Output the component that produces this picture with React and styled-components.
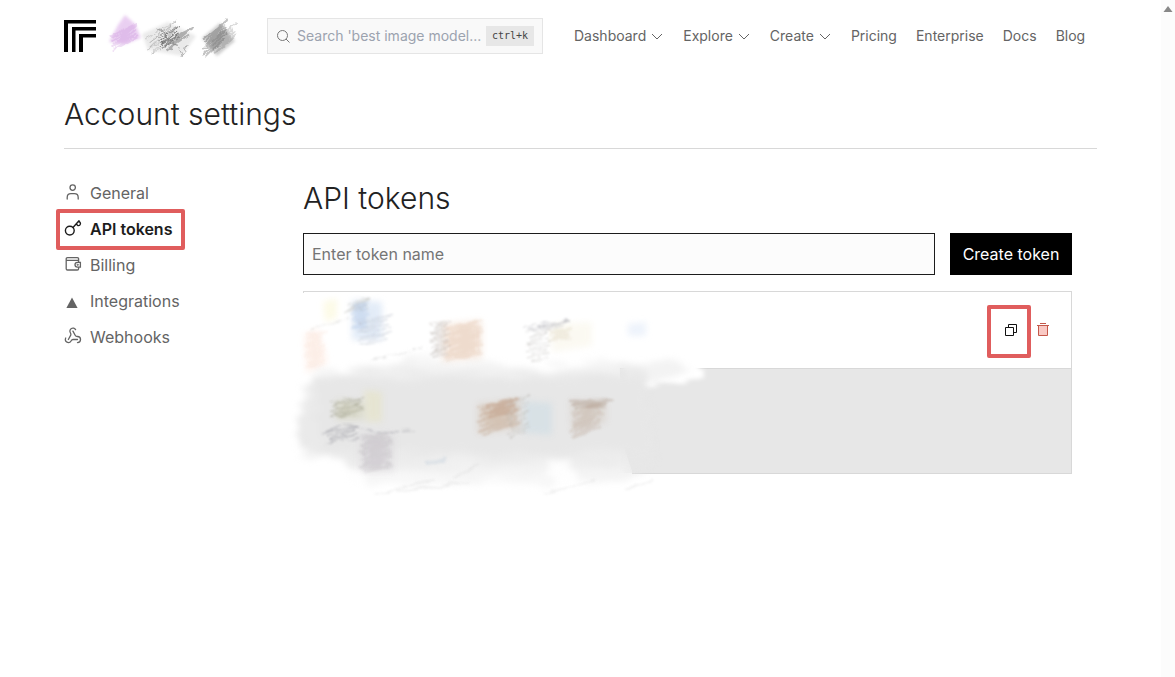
import React, { useState } from "react";
import styled, { createGlobalStyle } from "styled-components";

const GlobalStyle = createGlobalStyle`
  * {
    box-sizing: border-box;
  }
  body {
    margin: 0;
    background: #fff;
    color: #222;
    font: 400 16px/24px Inter, "Liberation Sans", sans-serif;
  }
  a {
    color: inherit;
    text-decoration: none;
  }
  button,
  input {
    font: inherit;
    border-radius: 0;
  }
`;

const Shell = styled.div`
  display: grid;
  grid-template-columns: minmax(0, 1fr) 14px;
  min-height: 100vh;
`;

const Page = styled.div`
  padding: 0 64px;
`;

const ScrollGutter = styled.div`
  display: flex;
  justify-content: center;
  padding-top: 6px;
  background: #fcfcfc;
`;

const Header = styled.header`
  display: flex;
  align-items: center;
  height: 72px;
`;

const Brand = styled.div`
  display: flex;
  align-items: center;
  width: 203px;
  flex: none;
  svg {
    display: block;
  }
`;

const Search = styled.label`
  display: flex;
  align-items: center;
  flex: none;
  width: 276px;
  height: 36px;
  padding: 0 8px;
  border: 1px solid #e5e5e5;
  background: #f9f9f9;
  input {
    flex: 1;
    min-width: 0;
    margin: 0 2px 0 6px;
    padding: 0;
    border: 0;
    outline: 0;
    background: none;
    font-size: 14px;
    text-overflow: ellipsis;
    &::placeholder {
      color: #9ca3af;
      opacity: 1;
    }
  }
  kbd {
    padding: 0 6px;
    background: #e7e7e7;
    color: #444;
    font: 10px/20px "DejaVu Sans Mono", monospace;
  }
`;

const Nav = styled.nav`
  display: flex;
  gap: 19px;
  margin-left: 31px;
  a {
    display: flex;
    align-items: center;
    gap: 4px;
    color: #646464;
    font-size: 14px;
    line-height: 20px;
  }
`;

const PageTitle = styled.h1`
  margin: 0;
  padding: 20px 0 12px;
  border-bottom: 1px solid #d8d8d8;
  font-size: 30px;
  font-weight: 350;
  line-height: 44px;
`;

const Columns = styled.div`
  display: grid;
  grid-template-columns: 239px minmax(0, 1fr);
  padding-top: 26px;
`;

const SideNav = styled.nav`
  display: flex;
  flex-direction: column;
  align-items: flex-start;
`;

const SideLink = styled.a`
  position: relative;
  display: flex;
  align-items: center;
  gap: 8px;
  height: 36px;
  color: ${({ $active }) => ($active ? "#1c1c1c" : "#646464")};
  font-weight: ${({ $active }) => ($active ? 600 : 400)};
  svg {
    margin-bottom: 2px;
  }
`;

const Marker = styled.span`
  position: absolute;
  inset: ${({ $inset }) => $inset};
  border: 4px solid #e05d5d;
  border-radius: 2px;
  pointer-events: none;
`;

const Content = styled.main`
  padding-right: 25px;
  h2 {
    margin: 0;
    font-size: 30px;
    font-weight: 350;
    line-height: 46px;
  }
`;

const TokenForm = styled.form`
  display: flex;
  gap: 15px;
  margin-top: 12px;
  input {
    flex: 1;
    min-width: 0;
    height: 42px;
    padding: 0 8px;
    border: 1px solid #1c1c1c;
    background: #fcfcfc;
    outline: 0;
    &::placeholder {
      color: #757575;
      opacity: 1;
    }
  }
  button {
    width: 122px;
    height: 42px;
    padding: 0;
    border: 0;
    background: #000;
    color: #fff;
    font-size: 16px;
  }
`;

const TokenList = styled.ul`
  position: relative;
  margin: 16px 0 0;
  padding: 0;
  border: 1px solid #d8d8d8;
  list-style: none;
`;

const TokenRow = styled.li`
  display: flex;
  justify-content: flex-end;
  align-items: center;
  gap: 12px;
  height: ${({ $muted }) => ($muted ? "105px" : "76px")};
  padding-right: 18px;
  background: ${({ $muted }) => ($muted ? "#e7e7e7" : "#fff")};
  border-top: ${({ $muted }) => ($muted ? "1px solid #d8d8d8" : "0")};
`;

const IconButton = styled.button`
  position: relative;
  display: flex;
  padding: 3px;
  border: 0;
  background: none;
`;

const ListSmudge = styled.svg`
  position: absolute;
  top: -12px;
  left: -24px;
  overflow: visible;
  pointer-events: none;
`;

const BrandIcon = () => (
  <svg width="32" height="32" viewBox="0 0 32 32" fill="#000" aria-hidden="true">
    <path d="M0 0h32v3.5H4V32H0z" />
    <path d="M8 7h24v3.5H11.5V32H8z" />
    <path d="M15 14h17v3.5H19V32h-4z" />
  </svg>
);

const Chevron = () => (
  <svg width="14" height="14" viewBox="0 0 14 14" fill="none" stroke="#646464" aria-hidden="true">
    <path d="m2 5 5 5 5-5" />
  </svg>
);

const SearchIcon = () => (
  <svg width="15" height="15" viewBox="0 0 15 15" fill="none" stroke="#777" aria-hidden="true">
    <circle cx="6.5" cy="6.5" r="5" />
    <path d="m10 10 3.5 3.5" />
  </svg>
);

const sideIcons = {
  user: (
    <g>
      <circle cx="8.7" cy="4.6" r="2.7" />
      <path d="M3.2 16v-1.6c0-2.4 1.6-3.8 3.8-3.8h3.4c2.2 0 3.8 1.4 3.8 3.8V16" />
    </g>
  ),
  key: (
    <g strokeWidth="1.4" strokeLinejoin="round">
      <circle cx="5.8" cy="11.6" r="4.4" />
      <path d="m9 8.5 6-6.7M12.2 5l1.6 1.6q1.4.3 2.2-.7.9-1 .1-2.5L14.8 2" />
    </g>
  ),
  wallet: (
    <g>
      <path d="M14.6 6.8V3.9c0-.8-.5-1.3-1.3-1.3H3.5c-.8 0-1.3.5-1.3 1.3v9.8c0 .8.5 1.3 1.3 1.3h9.8c.8 0 1.3-.5 1.3-1.3v-1M2.2 5.4h12.4" />
      <path d="M16.4 7.4v4.8h-3a2.4 2.4 0 0 1 0-4.8z" />
      <circle cx="13.7" cy="9.8" r=".4" />
    </g>
  ),
  triangle: <path d="m8 6.5 5.6 10.5H2.4z" fill="currentColor" stroke="none" />,
  webhook: (
    <g transform="translate(-.2 -.4) scale(.76)" strokeWidth="1.7">
      <path d="M18 16.98h-5.99c-1.1 0-1.95.94-2.48 1.9A4 4 0 0 1 2 17c.01-.7.2-1.4.57-2" />
      <path d="m6 17 3.13-5.78c.53-.97.1-2.18-.5-3.1a4 4 0 1 1 6.89-4.06" />
      <path d="m12 6 3.13 5.73C15.66 12.7 16.9 13 18 13a4 4 0 0 1 0 8" />
    </g>
  ),
};

const SideIcon = ({ name }) => (
  <svg
    width="18"
    height="18"
    viewBox="0 0 18 18"
    fill="none"
    stroke="currentColor"
    strokeWidth="1.3"
    strokeLinecap="round"
    aria-hidden="true"
  >
    {sideIcons[name]}
  </svg>
);

// back and forth pencil strokes filling a slanted patch
const Hatch = ({ x, y, w, h, color, opacity = 0.5, slant = 0.15, step = 3, width = 2 }) => {
  const points = [];
  for (let i = 0; i * step <= h; i++) {
    const jag = ((i * 7) % 5) * (w / 25);
    points.push(`${x + jag},${y + i * step + (w * slant) / 2}`);
    points.push(`${x + w - ((i * 11) % 4) * (w / 20)},${y + i * step - (w * slant) / 2}`);
  }
  return (
    <polyline
      points={points.join(" ")}
      fill="none"
      stroke={color}
      strokeWidth={width}
      opacity={opacity}
      strokeLinejoin="round"
    />
  );
};

const NameSmudge = () => (
  <svg width="150" height="60" viewBox="0 0 150 60" aria-hidden="true">
    <defs>
      <filter id="pencil" x="-20%" y="-20%" width="140%" height="140%" colorInterpolationFilters="sRGB">
        <feTurbulence type="fractalNoise" baseFrequency="0.1 0.2" numOctaves="2" seed="4" result="n" />
        <feDisplacementMap in="SourceGraphic" in2="n" scale="6" xChannelSelector="R" yChannelSelector="G" />
        <feGaussianBlur stdDeviation="0.7" />
      </filter>
      <filter id="soft" x="-30%" y="-30%" width="160%" height="160%">
        <feGaussianBlur stdDeviation="1.8" />
      </filter>
    </defs>
    <path d="M29 9 22 19 13 36l16 2 16-6-6-14z" fill="#d5a0e4" opacity=".5" filter="url(#soft)" />
    <path d="M46 28 72 16l28 14-14 20-34-6z" fill="#ccc" opacity=".4" filter="url(#soft)" />
    <path d="m106 32 18-15 15 18-18 15z" fill="#aaa" opacity=".6" filter="url(#soft)" />
    <g filter="url(#pencil)">
      <Hatch x={14} y={25} w={28} h={12} color="#c583d8" opacity={0.25} slant={0.5} />
      <Hatch x={50} y={24} w={30} h={18} color="#999" opacity={0.35} slant={0.6} width={1} step={4} />
      <Hatch x={62} y={25} w={22} h={14} color="#555" opacity={0.45} slant={0.6} width={1} />
      <Hatch x={66} y={30} w={30} h={8} color="#555" opacity={0.4} slant={0.5} />
      <path d="m62 22 12 12 8 6" stroke="#666" strokeWidth="2" fill="none" opacity=".4" />
      <path d="m82 42 5 9 4-12" stroke="#999" fill="none" opacity=".7" />
      <Hatch x={107} y={24} w={24} h={18} color="#555" opacity={0.35} slant={0.8} />
      <Hatch x={117} y={26} w={22} h={14} color="#666" opacity={0.25} slant={0.8} />
    </g>
  </svg>
);

const TokenSmudge = () => (
  <ListSmudge width="440" height="230" viewBox="0 0 440 230" aria-hidden="true">
    <defs>
      <linearGradient id="greyFade" x1="0" y1="0" x2="0" y2="1">
        <stop offset="0" stopColor="#e7e7e7" stopOpacity="0" />
        <stop offset=".22" stopColor="#e7e7e7" />
        <stop offset=".72" stopColor="#e7e7e7" />
        <stop offset="1" stopColor="#e7e7e7" stopOpacity="0.2" />
      </linearGradient>
      <linearGradient id="sideFade" x1="0" y1="0" x2="1" y2="0">
        <stop offset="0" stopColor="#e7e7e7" stopOpacity="0" />
        <stop offset=".6" stopColor="#e7e7e7" />
        <stop offset="1" stopColor="#e7e7e7" />
      </linearGradient>
      <filter id="cover" x="-10%" y="-20%" width="120%" height="140%" colorInterpolationFilters="sRGB">
        <feTurbulence type="fractalNoise" baseFrequency="0.02 0.2" numOctaves="2" seed="5" result="n" />
        <feDisplacementMap in="SourceGraphic" in2="n" scale="24" xChannelSelector="R" yChannelSelector="A" />
        <feGaussianBlur stdDeviation="2" />
      </filter>
      <filter id="wash" x="-10%" y="-10%" width="120%" height="120%" colorInterpolationFilters="sRGB">
        <feTurbulence type="fractalNoise" baseFrequency="0.02 0.12" numOctaves="3" seed="8" result="n" />
        <feDisplacementMap in="SourceGraphic" in2="n" scale="24" xChannelSelector="R" yChannelSelector="G" />
        <feGaussianBlur stdDeviation="3" />
      </filter>
      <filter id="tint" x="-40%" y="-40%" width="180%" height="180%">
        <feGaussianBlur stdDeviation="3" />
      </filter>
      <filter id="crayon" x="-10%" y="-10%" width="120%" height="120%" colorInterpolationFilters="sRGB">
        <feTurbulence type="fractalNoise" baseFrequency="0.06 0.2" numOctaves="2" seed="3" result="n" />
        <feDisplacementMap in="SourceGraphic" in2="n" scale="7" xChannelSelector="R" yChannelSelector="G" />
        <feGaussianBlur stdDeviation="0.9" />
      </filter>
    </defs>
    <path d="M16 13h324v142l12 36v15H16z" fill="#fff" />
    <path d="M335 66h60l29 18-2 14-70 8z" fill="#fff" filter="url(#cover)" />
    <path d="M338 114h50v79h-50z" fill="url(#sideFade)" />
    <g filter="url(#wash)">
      <path
        d="M34 90 114 88l35-16 30 4 70 12 75-6 46 10v94l-20 14-80 6-80-6-60 6-60-4-2-24-55-6z"
        fill="url(#greyFade)"
      />
      <path d="M20 110 38 102l4 78-22-4z" fill="#ededed" opacity=".6" />
      <path d="m272 182 22-2 4 30-30 4z" fill="#fff" opacity=".9" />
      <path d="m20 176 66 10v24H20z" fill="#fff" opacity=".9" />
      <path d="m338 84 60-4 14 12-60 12z" fill="#e7e7e7" opacity=".5" />
    </g>
    <g filter="url(#tint)" opacity=".75">
      <path d="m24 54 14-6 10 34-22 12z" fill="#fdebe1" opacity=".7" />
      <path d="m43 22 14-4v20l-12 4z" fill="#fbf8d8" opacity=".8" />
      <path d="m72 20 30 2v38H72z" fill="#dae6f5" />
      <path d="m162 44 40-4v38l-40 4z" fill="#f2dfd0" opacity=".8" />
      <path d="m272 44 40-2v24l-40 6z" fill="#f9f6ea" opacity=".8" />
      <path d="m348 44 18-2v14h-18z" fill="#dee8f8" opacity=".7" />
      <path d="m56 120 28 2v18H56z" fill="#d3d2b8" opacity=".7" />
      <path d="m84 110 18 2v30H86z" fill="#e6e4c4" opacity=".8" />
      <path d="m80 152 34 2v38H80z" fill="#d5d1d7" opacity=".5" />
      <path d="m198 124 40-4v28l-40 6z" fill="#d9c7b8" opacity=".7" />
      <path d="m244 121 28 2v32l-28-2z" fill="#d3dfe5" />
      <path d="m290 120 36 2v20l-34 10z" fill="#d6cdc5" opacity=".7" />
    </g>
    <g filter="url(#crayon)">
      <Hatch x={64} y={21} w={26} h={10} color="#a8aaa0" opacity={0.35} width={1} />
      <Hatch x={72} y={24} w={16} h={24} color="#9ebbe0" opacity={0.3} />
      <Hatch x={76} y={38} w={36} h={26} color="#b6bdc9" opacity={0.35} width={1} step={4} />
      <Hatch x={25} y={54} w={20} h={34} color="#f4d9c9" opacity={0.2} step={4} />
      <path d="m30 50 38-12M92 80l50-12" stroke="#aaa" opacity=".3" fill="none" />
      <Hatch x={150} y={43} w={20} h={34} color="#aca49e" opacity={0.35} width={1} />
      <Hatch x={165} y={44} w={38} h={34} color="#d0a482" opacity={0.22} slant={0.2} />
      <Hatch x={245} y={43} w={44} h={6} color="#8f9097" opacity={0.35} width={1} />
      <Hatch x={246} y={51} w={25} h={28} color="#b5b4b0" opacity={0.3} width={1} step={4} />
      <Hatch x={268} y={50} w={24} h={10} color="#d8cdb4" opacity={0.3} />
      <Hatch x={50} y={120} w={34} h={16} color="#8f8e78" opacity={0.35} width={1} />
      <Hatch x={44} y={149} w={36} h={12} color="#85858f" opacity={0.4} width={1} step={4} />
      <path d="m42 153 24-9 16 4 20 4 32-1" stroke="#80808c" opacity=".45" fill="none" />
      <Hatch x={80} y={154} w={32} h={38} color="#958b98" opacity={0.2} />
      <path d="m146 183 20-4" stroke="#bccbda" strokeWidth="4" opacity=".35" />
      <Hatch x={197} y={123} w={42} h={28} color="#b08868" opacity={0.25} slant={0.2} />
      <Hatch x={205} y={122} w={33} h={14} color="#b5896a" opacity={0.3} slant={0.2} />
      <Hatch x={226} y={118} w={24} h={36} color="#b4aeaa" opacity={0.3} width={1} slant={0.3} step={4} />
      <Hatch x={290} y={121} w={42} h={8} color="#9d8470" opacity={0.32} slant={0.05} />
      <Hatch x={291} y={128} w={30} h={24} color="#b0947e" opacity={0.25} slant={0.4} />
      <path
        d="m174 198 26-15M95 214l60-14M118 212l70-10M265 214l50-14M345 210l28-10"
        stroke="#ccc"
        strokeWidth="2"
        opacity=".25"
      />
    </g>
  </ListSmudge>
);

const CopyIcon = () => (
  <svg width="14" height="14" viewBox="0 0 14 14" fill="none" stroke="#111" aria-hidden="true">
    <path d="M1.5 4.5h8v8h-8zM4.5 4.5v-3h8v8h-3" />
  </svg>
);

const TrashIcon = () => (
  <svg width="14" height="14" viewBox="0 0 14 14" stroke="#c4584a" aria-hidden="true">
    <path d="M2.5 2.5h9v10h-9z" fill="#f9c9c4" />
    <path d="M1 2.5h12M4 .5h6" />
  </svg>
);

const navLinks = [
  { label: "Dashboard", menu: true },
  { label: "Explore", menu: true },
  { label: "Create", menu: true },
  { label: "Pricing" },
  { label: "Enterprise" },
  { label: "Docs" },
  { label: "Blog" },
];

const sections = [
  { label: "General", icon: "user" },
  { label: "API tokens", icon: "key", active: true },
  { label: "Billing", icon: "wallet" },
  { label: "Integrations", icon: "triangle" },
  { label: "Webhooks", icon: "webhook" },
];

const App = () => {
  const [query, setQuery] = useState("");
  const [tokenName, setTokenName] = useState("");

  return (
    <Shell>
      <GlobalStyle />
      <Page>
        <Header>
          <Brand>
            <BrandIcon />
            <NameSmudge />
          </Brand>
          <Search>
            <SearchIcon />
            <input
              type="text"
              aria-label="Search"
              placeholder="Search 'best image model..."
              value={query}
              onChange={(e) => setQuery(e.target.value)}
            />
            <kbd>ctrl+k</kbd>
          </Search>
          <Nav>
            {navLinks.map(({ label, menu }) => (
              <a href="#" key={label}>
                {label}
                {menu && <Chevron />}
              </a>
            ))}
          </Nav>
        </Header>
        <PageTitle>Account settings</PageTitle>
        <Columns>
          <SideNav>
            {sections.map(({ label, icon, active }) => (
              <SideLink href="#" key={label} $active={active}>
                <SideIcon name={icon} />
                {label}
                {active && <Marker $inset="-2px -13px -3px -8px" />}
              </SideLink>
            ))}
          </SideNav>
          <Content>
            <h2>API tokens</h2>
            <TokenForm onSubmit={(e) => e.preventDefault()}>
              <input
                type="text"
                aria-label="Token name"
                placeholder="Enter token name"
                value={tokenName}
                onChange={(e) => setTokenName(e.target.value)}
              />
              <button type="submit">Create token</button>
            </TokenForm>
            <TokenList>
              <TokenRow>
                <IconButton type="button" aria-label="Copy token">
                  <CopyIcon />
                  <Marker $inset="-15px -10px -18px -14px" />
                </IconButton>
                <IconButton type="button" aria-label="Delete token">
                  <TrashIcon />
                </IconButton>
              </TokenRow>
              <TokenRow $muted />
              <TokenSmudge />
            </TokenList>
          </Content>
        </Columns>
      </Page>
      <ScrollGutter>
        <svg width="10" height="6" viewBox="0 0 10 6" aria-hidden="true">
          <path d="M5 0 9.5 6H.5z" fill="#888" />
        </svg>
      </ScrollGutter>
    </Shell>
  );
};

export default App;
